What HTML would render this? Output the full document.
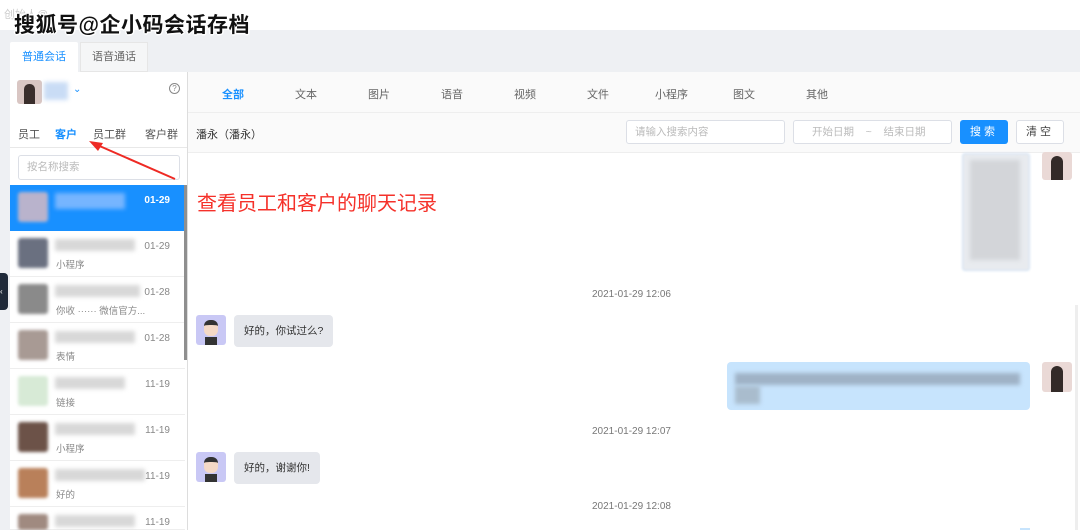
<!DOCTYPE html>
<html style="width:1080px;height:530px;overflow:hidden"><head><meta charset="utf-8"><style>
*{margin:0;padding:0;box-sizing:border-box}
body{width:1080px;height:530px;overflow:hidden;background:#eef0f3;font-family:"Liberation Sans","Noto Sans CJK SC",sans-serif;position:relative;font-size:11px;color:#555}
.a{position:absolute}
.title{left:14px;top:9px;font-size:21px;font-weight:bold;color:#111;letter-spacing:0.5px;text-shadow:-1.5px 0 #fff,1.5px 0 #fff,0 -1.5px #fff,0 1.5px #fff,1px 1px #fff,-1px -1px #fff}
.blur{background:#c9cbd0;filter:blur(2px);opacity:.8}
.item{position:absolute;left:10px;width:175px;height:46px;border-bottom:1px solid #eee;background:#fff}
.item .av{position:absolute;left:8px;top:7px;width:30px;height:30px;border-radius:3px;filter:blur(1.5px)}
.item .d{position:absolute;right:15px;top:10px;color:#888;font-size:10px}
.item .s{position:absolute;left:46px;top:26px;color:#888;font-size:9.5px}
.item .n{position:absolute;left:45px;top:8px;width:80px;height:12px;background:#d8d8d8;filter:blur(2px)}
.ts{position:absolute;left:592px;color:#777;font-size:10px}
.lav{position:absolute;left:196px;width:30px;height:30px;background:#c9c8f5;border-radius:3px;overflow:hidden}
.bub{position:absolute;left:234px;height:32px;background:#e5e7ec;border-radius:4px;padding:0 10px;line-height:32px;color:#333;font-size:10.5px}
</style></head><body>
<div class="a" style="left:0;top:0;width:1080px;height:30px;background:#fff"></div>
<div class="a" style="left:4px;top:6px;color:#ccc;font-size:11px">创始人@</div>
<div class="a title">搜狐号@企小码会话存档</div>
<div class="a" style="left:10px;top:42px;width:68px;height:31px;background:#fff;color:#1890ff;font-size:11px;text-align:center;line-height:31px;border-radius:2px 2px 0 0">普通会话</div>
<div class="a" style="left:80px;top:42px;width:68px;height:30px;background:#f5f6f7;border:1px solid #e6e6e6;color:#666;font-size:11px;text-align:center;line-height:28px">语音通话</div>
<div class="a" style="left:10px;top:72px;width:177px;height:458px;background:#fff"></div>
<div class="a" style="left:17px;top:80px;width:25px;height:24px;background:#d9c6c3;border-radius:3px;overflow:hidden"><div style="margin:4px 0 0 7px;width:11px;height:20px;background:#3a2e2c;border-radius:5px 5px 0 0"></div></div>
<div class="a blur" style="left:44px;top:82px;width:24px;height:18px;background:#bcd4f3"></div>
<div class="a" style="left:73px;top:84px;color:#1890ff;font-size:10px">⌄</div>
<div class="a" style="left:169px;top:83px;width:11px;height:11px;border:1px solid #888;border-radius:50%;font-size:8px;text-align:center;line-height:9px;color:#888">?</div>
<div class="a" style="left:18px;top:126px;font-size:11px;color:#555">员工</div>
<div class="a" style="left:55px;top:126px;font-size:11px;color:#1890ff;font-weight:bold">客户</div>
<div class="a" style="left:93px;top:126px;font-size:11px;color:#555">员工群</div>
<div class="a" style="left:145px;top:126px;font-size:11px;color:#555">客户群</div>
<div class="a" style="left:10px;top:147px;width:177px;height:1px;background:#e8e8e8"></div>
<div class="a" style="left:18px;top:155px;width:162px;height:25px;border:1px solid #dcdfe6;border-radius:3px;color:#bbb;font-size:10.5px;line-height:23px;padding-left:8px">按名称搜索</div>
<div class="item" style="top:185px;background:#1890ff;border:none"><div class="av" style="background:#b9b3cc"></div><div class="n" style="background:#76b5ff;width:70px;height:16px"></div><div class="d" style="color:#fff;font-weight:bold">01-29</div></div>
<div class="item" style="top:231px"><div class="av" style="background:#6a7080"></div><div class="n"></div><div class="d">01-29</div><div class="s">小程序</div></div>
<div class="item" style="top:277px"><div class="av" style="background:#8a8a8a"></div><div class="n" style="width:85px"></div><div class="d">01-28</div><div class="s">你收 ······ 微信官方...</div></div>
<div class="item" style="top:323px"><div class="av" style="background:#a89a94"></div><div class="n"></div><div class="d">01-28</div><div class="s">表情</div></div>
<div class="item" style="top:369px"><div class="av" style="background:#d7ead6"></div><div class="n" style="width:70px"></div><div class="d">11-19</div><div class="s">链接</div></div>
<div class="item" style="top:415px"><div class="av" style="background:#6c5248"></div><div class="n" style="width:80px"></div><div class="d">11-19</div><div class="s">小程序</div></div>
<div class="item" style="top:461px"><div class="av" style="background:#b9805a"></div><div class="n" style="width:90px"></div><div class="d">11-19</div><div class="s">好的</div></div>
<div class="item" style="top:507px;height:23px"><div class="av" style="background:#a08a80;height:16px"></div><div class="n"></div><div class="d">11-19</div></div>
<div class="a" style="left:184px;top:185px;width:3px;height:175px;background:#8f8f8f"></div>
<div class="a" style="left:0;top:273px;width:8px;height:37px;background:#1f2a3a;border-radius:0 4px 4px 0;color:#fff;font-size:8px;line-height:37px">‹</div>
<div class="a" style="left:187px;top:72px;width:893px;height:458px;background:#fff;border-left:1px solid #ddd"></div>
<div class="a" style="left:188px;top:72px;width:892px;height:41px;background:#fafafa;border-bottom:1px solid #eee"></div>
<div class="a" style="left:222px;top:86px;color:#1890ff;font-weight:bold;font-size:11px">全部</div>
<div class="a" style="left:295px;top:86px;font-size:11px;color:#666">文本</div>
<div class="a" style="left:368px;top:86px;font-size:11px;color:#666">图片</div>
<div class="a" style="left:441px;top:86px;font-size:11px;color:#666">语音</div>
<div class="a" style="left:514px;top:86px;font-size:11px;color:#666">视频</div>
<div class="a" style="left:587px;top:86px;font-size:11px;color:#666">文件</div>
<div class="a" style="left:655px;top:86px;font-size:11px;color:#666">小程序</div>
<div class="a" style="left:733px;top:86px;font-size:11px;color:#666">图文</div>
<div class="a" style="left:806px;top:86px;font-size:11px;color:#666">其他</div>
<div class="a" style="left:188px;top:113px;width:892px;height:40px;background:#fafafa;border-bottom:1px solid #eee"></div>
<div class="a" style="left:196px;top:126px;font-size:11px;color:#333">潘永（潘永）</div>
<div class="a" style="left:626px;top:120px;width:159px;height:24px;border:1px solid #dcdfe6;border-radius:3px;background:#fff;color:#bbb;font-size:10.5px;line-height:22px;padding-left:8px">请输入搜索内容</div>
<div class="a" style="left:793px;top:120px;width:159px;height:24px;border:1px solid #dcdfe6;border-radius:3px;background:#fff;color:#bbb;font-size:10.5px;line-height:22px;padding-left:18px;white-space:pre">开始日期    ~    结束日期</div>
<div class="a" style="left:960px;top:120px;width:48px;height:24px;background:#1890ff;border-radius:3px;color:#fff;font-size:11px;text-align:center;line-height:24px;letter-spacing:3px">搜索</div>
<div class="a" style="left:1016px;top:120px;width:48px;height:24px;border:1px solid #dcdfe6;background:#fff;border-radius:3px;color:#444;font-size:11px;text-align:center;line-height:22px;letter-spacing:3px">清空</div>
<div class="a" style="left:197px;top:187px;color:#f5312a;font-size:20px">查看员工和客户的聊天记录</div>
<svg class="a" style="left:85px;top:135px" width="95" height="48"><line x1="90" y1="44" x2="10" y2="9" stroke="#ee2a24" stroke-width="2"/><polygon points="4,6 18,8 13,16" fill="#ee2a24"/></svg>
<div class="a" style="left:962px;top:153px;width:68px;height:118px;background:#e8ebef;border:1px solid #cfe1f5;border-radius:3px;filter:blur(1px)"></div>
<div class="a" style="left:970px;top:160px;width:50px;height:100px;background:#d3d5d9;filter:blur(2px)"></div>
<div class="a" style="left:1042px;top:152px;width:30px;height:28px;background:#ead9d6;border-radius:3px;overflow:hidden"><div style="margin:4px 0 0 9px;width:12px;height:24px;background:#332a28;border-radius:6px 6px 0 0"></div></div>
<div class="ts" style="top:289px">2021-01-29 12:06</div>
<div class="lav" style="top:315px"><div style="margin:5px 0 0 8px;width:14px;height:16px;background:#f4d9c6;border-top:5px solid #333;border-radius:6px"></div><div style="margin:1px 0 0 9px;width:12px;height:8px;background:#333"></div></div>
<div class="bub" style="top:315px">好的，你试过么?</div>
<div class="a" style="left:727px;top:362px;width:303px;height:48px;background:#c7e4fd;border-radius:4px"></div>
<div class="a" style="left:735px;top:373px;width:285px;height:12px;background:#9fb2c6;filter:blur(2px)"></div>
<div class="a" style="left:735px;top:386px;width:25px;height:18px;background:#a9bccd;filter:blur(2px)"></div>
<div class="a" style="left:1042px;top:362px;width:30px;height:30px;background:#ead9d6;border-radius:3px;overflow:hidden"><div style="margin:4px 0 0 9px;width:12px;height:26px;background:#332a28;border-radius:6px 6px 0 0"></div></div>
<div class="ts" style="top:426px">2021-01-29 12:07</div>
<div class="lav" style="top:452px"><div style="margin:5px 0 0 8px;width:14px;height:16px;background:#f4d9c6;border-top:5px solid #333;border-radius:6px"></div><div style="margin:1px 0 0 9px;width:12px;height:8px;background:#333"></div></div>
<div class="bub" style="top:452px">好的，谢谢你!</div>
<div class="ts" style="top:501px">2021-01-29 12:08</div>
<div class="a" style="left:1020px;top:528px;width:10px;height:2px;background:#c7e4fd"></div>
<div class="a" style="left:1075px;top:305px;width:3px;height:225px;background:#eee"></div>
</body></html>
